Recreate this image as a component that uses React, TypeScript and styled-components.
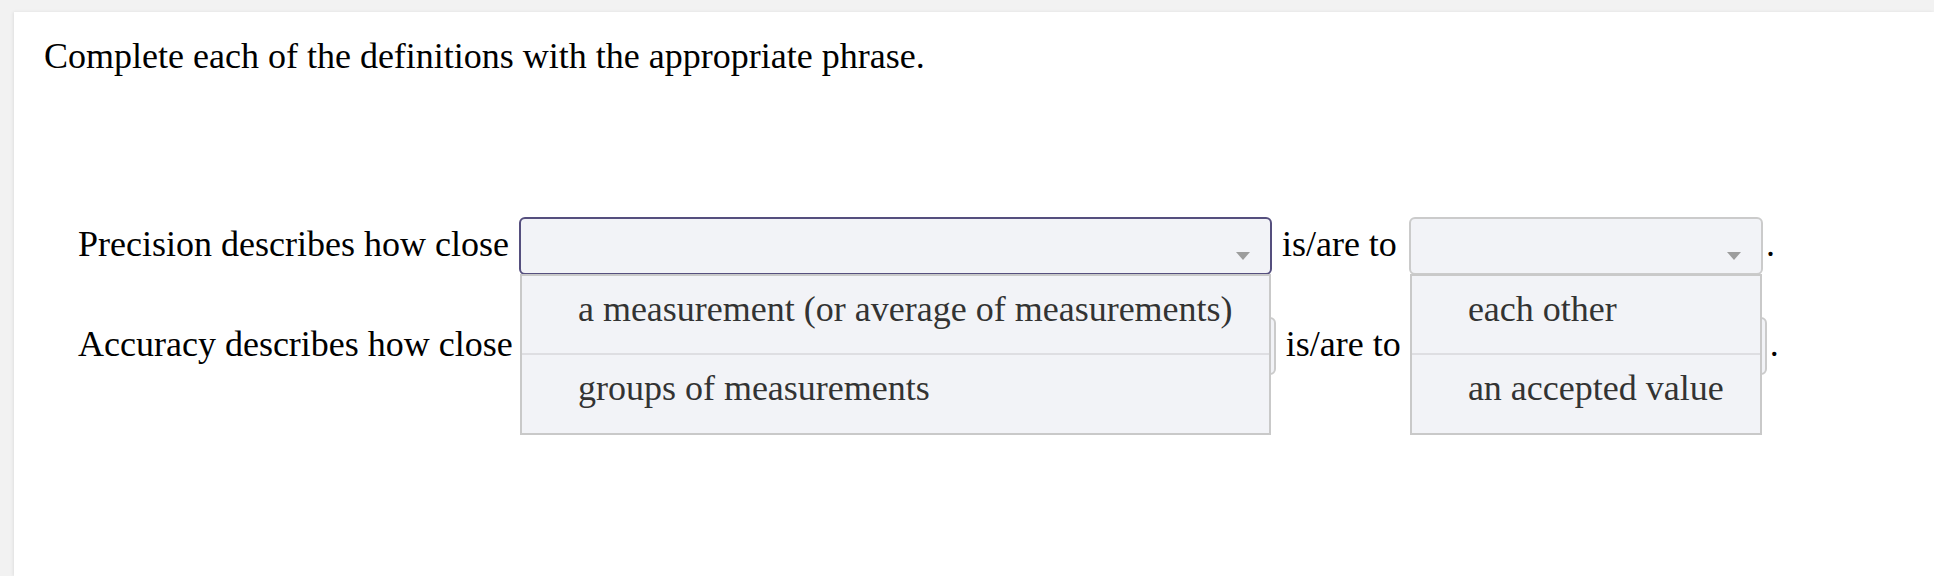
import React from "react";
import styled, { createGlobalStyle } from "styled-components";

const GlobalStyle = createGlobalStyle`
  body {
    margin: 0;
    background: #f2f2f2;
    font-family: "Liberation Serif", "Times New Roman", serif;
  }
`;

const Page = styled.div`
  padding: 12px 0 0 14px;
`;

const Panel = styled.div`
  background: #ffffff;
  min-height: 564px;
  box-sizing: border-box;
  padding: 24px 0 0 30px;
  box-shadow: -1px 0 3px rgba(0, 0, 0, 0.08);
`;

const Title = styled.p`
  margin: 0;
  font-size: 36px;
  line-height: 41px;
  color: #000;
`;

const Rows = styled.div`
  margin-top: 140px;
  padding-left: 34px;
  display: flex;
  flex-direction: column;
  gap: 42px;
`;

const Row = styled.div`
  display: flex;
  align-items: flex-start;
  height: 58px;
  font-size: 36px;
  line-height: 41px;
  color: #000;
`;

const Label = styled.span`
  padding-top: 7px;
  margin-right: 10px;
  white-space: nowrap;
`;

const Connector = styled.span`
  padding-top: 7px;
  margin: 0 12px 0 10px;
  white-space: nowrap;
`;

const Period = styled.span`
  padding-top: 7px;
  margin-left: 3px;
`;

const SelectBox = styled.div<{ $width: number; $focused?: boolean }>`
  position: relative;
  width: ${(p) => p.$width}px;
  height: 58px;
  box-sizing: border-box;
  border: 2px solid ${(p) => (p.$focused ? "#554f7e" : "#cbcbcb")};
  border-radius: 6px;
  background: #f2f3f7;
  display: flex;
  justify-content: flex-end;
  align-items: flex-end;
  padding: 0 20px 13px 0;
  flex-shrink: 0;
`;

const Menu = styled.ul`
  position: absolute;
  top: 55px;
  left: -1px;
  right: -1px;
  margin: 0;
  padding: 0;
  list-style: none;
  background: #f2f3f7;
  border: 2px solid #c9c9c9;
  z-index: 5;
`;

const MenuItem = styled.li`
  height: 77px;
  box-sizing: border-box;
  padding: 13px 0 0 56px;
  font-size: 36px;
  line-height: 41px;
  color: #333;
  white-space: nowrap;
  & + & {
    border-top: 2px solid #dedee2;
    height: 80px;
  }
`;

const Arrow = () => (
  <svg width="14" height="8" viewBox="0 0 14 8">
    <path d="M0 0 L14 0 L7 8 Z" fill="#9d9d9d" />
  </svg>
);

interface SelectProps {
  width: number;
  focused?: boolean;
  options?: string[];
}

function Select({ width, focused, options }: SelectProps) {
  return (
    <SelectBox $width={width} $focused={focused}>
      <Arrow />
      {options && (
        <Menu>
          {options.map((o) => (
            <MenuItem key={o}>{o}</MenuItem>
          ))}
        </Menu>
      )}
    </SelectBox>
  );
}

const subjects = ["a measurement (or average of measurements)", "groups of measurements"];
const targets = ["each other", "an accepted value"];

export default function App() {
  return (
    <>
      <GlobalStyle />
      <Page>
        <Panel>
          <Title>Complete each of the definitions with the appropriate phrase.</Title>
          <Rows>
            <Row>
              <Label>Precision describes how close</Label>
              <Select width={753} focused options={subjects} />
              <Connector>is/are to</Connector>
              <Select width={354} options={targets} />
              <Period>.</Period>
            </Row>
            <Row>
              <Label>Accuracy describes how close</Label>
              <Select width={753} />
              <Connector>is/are to</Connector>
              <Select width={354} />
              <Period>.</Period>
            </Row>
          </Rows>
        </Panel>
      </Page>
    </>
  );
}
